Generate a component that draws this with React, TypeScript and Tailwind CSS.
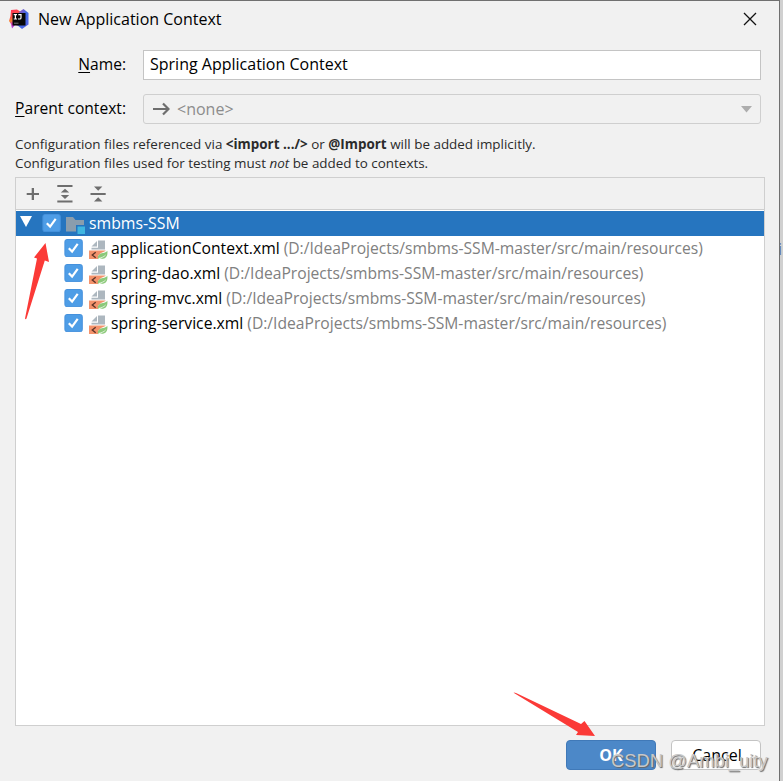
import type { ReactNode } from "react";

const RESOURCES = "(D:/IdeaProjects/smbms-SSM-master/src/main/resources)";

const files = [
  "applicationContext.xml",
  "spring-dao.xml",
  "spring-mvc.xml",
  "spring-service.xml",
];

function AppLogo() {
  return (
    <svg width="20" height="20" viewBox="0 0 20 20" className="shrink-0">
      <defs>
        <linearGradient id="logoLeft" x1="0" y1="0" x2="0.3" y2="1">
          <stop offset="0" stopColor="#fe2857" />
          <stop offset="0.45" stopColor="#fc5a46" />
          <stop offset="0.6" stopColor="#f58a2c" />
          <stop offset="0.75" stopColor="#d23bb0" />
          <stop offset="1" stopColor="#a23be0" />
        </linearGradient>
        <linearGradient id="logoRight" x1="0" y1="0" x2="1" y2="1">
          <stop offset="0" stopColor="#b04fb0" />
          <stop offset="0.5" stopColor="#3f6be8" />
          <stop offset="1" stopColor="#5a62e0" />
        </linearGradient>
      </defs>
      <path d="M2 1L8 0.5L12 3V17L6 16L3 19.500L2 15L0 12L1.500 7Z" fill="url(#logoLeft)" />
      <path d="M10 3L14.500 0L19.500 4V15.500L13 20L8 16Z" fill="url(#logoRight)" />
      <path d="M3.500 4H16.500V16.500H3.500Z" fill="#080808" />
      <path
        d="M4.700 5.700H8M6.400 5.700V10M4.700 10H8M9.300 5.700H12V8.700Q12 10 10.900 10H9"
        fill="none"
        stroke="#fff"
        strokeWidth="1.200"
      />
      <path d="M5 14.200H9.500" stroke="#777" strokeWidth="1" />
    </svg>
  );
}

function Checkbox() {
  return (
    <svg width="19" height="18" viewBox="0 0 19 18" className="shrink-0">
      <rect x="0.900" y="0.500" width="17.400" height="17.200" rx="2" fill="#4e9de6" stroke="#4691dc" />
      <path d="M4.800 9.200L8.100 12.600L13.700 4.800" fill="none" stroke="#fff" strokeWidth="2.200" />
    </svg>
  );
}

function FolderIcon() {
  return (
    <svg width="19" height="18" viewBox="0 0 19 18" className="shrink-0">
      <path d="M0 1H7L9.500 4H18V9H10V15.500H0Z" fill="#8a9dad" />
      <path d="M11.500 10.500H19V18H11.500Z" fill="#40b6e0" />
    </svg>
  );
}

function SpringFileIcon() {
  return (
    <svg width="19" height="20" viewBox="0 0 19 20" className="shrink-0">
      <path d="M2.500 6.500L8 1V6.500Z" fill="#adb7bf" />
      <path d="M9 0.500H16V9.500H2.500V7.800H9Z" fill="#adb7bf" />
      <path d="M0 10.500H16.500V11L12 13L9 16V19H0Z" fill="#f4936c" />
      <path d="M6.700 12.300L3.300 15L6.700 17.700" fill="none" stroke="#5d3528" strokeWidth="1.400" />
      <path
        d="M18.300 10.800C18.900 14.200 18 18.200 14 18.800C12.400 19 11.200 18.600 10.400 18.100L9.300 19.300L8.900 18.600C8.300 15.400 10.800 13.500 14 13.100C15.800 12.900 17.200 12.100 18.300 10.800Z"
        fill="#8cc97a"
      />
      <path d="M9.500 18.500C12 17.700 15 17.100 16.600 15" fill="none" stroke="#fff" strokeWidth="0.700" />
    </svg>
  );
}

function Toolbar() {
  return (
    <div className="flex h-[32px] items-center border-b border-[#cfcfcf] bg-[#f1f1f1] pl-[10px]">
      <svg width="84" height="20" viewBox="0 0 84 20" fill="#6e6e6e">
        <path d="M5.700 4H8V8.900H13V11.100H8V16H5.700V11.100H0.700V8.900H5.700Z" />
        <path d="M31.300 1H46.500V3H31.300ZM31.300 16.500H46.500V18.500H31.300Z" />
        <path d="M39 4.800L43.200 8.500H34.800ZM34.800 11H43.200L39 15Z" />
        <path d="M64.500 9H79.700V11H64.500ZM68 2.500H76.400L72.200 6.800ZM72.200 13.300L76.400 17.500H68Z" />
      </svg>
    </div>
  );
}

function FieldLabel({ children }: { children: ReactNode }) {
  return <div className="w-[127px] shrink-0 pb-[2px] pr-px text-right text-[15.600px]">{children}</div>;
}

function FileRow({ name }: { name: string }) {
  return (
    <div className="flex h-[25px] items-center whitespace-nowrap pb-px pl-[48px] text-[15.700px]">
      <Checkbox />
      <div className="ml-[6px] mt-[4px]">
        <SpringFileIcon />
      </div>
      <span className="ml-[3px]">{name}</span>
      <span className="ml-[4px] text-[15.650px] text-[#808080]">{RESOURCES}</span>
    </div>
  );
}

export default function App() {
  return (
    <div className="relative flex h-[781px] w-[783px] overflow-hidden bg-[#d0d0d0] font-['Open_Sans','Noto_Sans',sans-serif] text-[16px] leading-[20px] text-black">
      <main className="flex w-[780px] shrink-0 flex-col border-r border-t border-[#707070] bg-[#f1f1f1]">
        <header className="flex h-[36px] items-center pl-[9px] pr-[22px]">
          <AppLogo />
          <h1 className="ml-[9px] grow whitespace-nowrap">New Application Context</h1>
          <svg width="14" height="14" viewBox="0 0 14 14">
            <path d="M1 1L13 13M13 1L1 13" stroke="#111" strokeWidth="1.300" />
          </svg>
        </header>

        <div className="mt-[13px] flex h-[30px] items-center">
          <FieldLabel>
            <span className="underline underline-offset-2">N</span>ame:
          </FieldLabel>
          <div className="ml-[16px] flex h-[30px] w-[618px] items-center border border-[#c4c4c4] bg-white pb-[2px] pl-[6px]">
            <span>Spring Application Context</span>
          </div>
        </div>

        <div className="mt-[14px] flex h-[30px] items-center">
          <FieldLabel>
            <span className="underline underline-offset-2">P</span>arent context:
          </FieldLabel>
          <div className="ml-[16px] flex h-[30px] w-[618px] items-center rounded-[3px] border border-[#cfcfcf] pl-[9px] pr-[8px] text-[#8c8c8c]">
            <svg width="17" height="14" viewBox="0 0 17 14" fill="none" stroke="#6e6e6e" strokeWidth="2.200">
              <path d="M0 7H15M10 1.500L15.500 7L10 12.500" />
            </svg>
            <span className="ml-[7px] grow">&lt;none&gt;</span>
            <svg width="11" height="7" viewBox="0 0 11 7">
              <path d="M0 0H11L5.500 6.500Z" fill="#adadad" />
            </svg>
          </div>
        </div>

        <div className="mt-[11px] whitespace-nowrap pl-[15px] text-[13.430px] leading-[19px] text-[#2b2b2b]">
          <p>
            <span>Configuration files referenced via </span>
            <b>&lt;import .../&gt;</b> or <b>@Import</b> will be added implicitly.
          </p>
          <p>
            Configuration files used for testing must <i>not</i> be added to contexts.
          </p>
        </div>

        <section className="ml-[15px] mt-[4px] h-[549px] w-[750px] border border-[#cfcfcf] bg-white">
          <Toolbar />
          <div className="mt-px flex h-[25px] items-center bg-[#2675bf] pb-px pl-[4px] text-white">
            <svg width="12" height="11" viewBox="0 0 12 11" className="mb-[3px]">
              <path d="M0 0H12L6 11Z" fill="#fff" />
            </svg>
            <div className="ml-[10px]">
              <Checkbox />
            </div>
            <div className="ml-[5px] mt-[3px]">
              <FolderIcon />
            </div>
            <span className="ml-[4px] text-[15.800px]">smbms-SSM</span>
          </div>
          {files.map((name) => (
            <FileRow key={name} name={name} />
          ))}
        </section>

        <footer className="mt-[14px] flex justify-end pr-[18px]">
          <button className="h-[30px] w-[90px] rounded-[4px] border border-[#4079b8] bg-[#4c88c8] font-bold text-white">
            OK
          </button>
          <button className="ml-[15px] h-[30px] w-[90px] rounded-[4px] border border-[#c4c4c4] bg-white pl-[2px]">
            Cancel
          </button>
        </footer>
      </main>

      <div className="mt-[239px] w-[3px] overflow-hidden text-[#5c6ea0]">
        <span className="-ml-[2px]">i</span>
      </div>

      <svg width="783" height="781" viewBox="0 0 783 781" className="pointer-events-none absolute left-0 top-0" fill="#fb3a37">
        <path d="M45.500 243L49 262L44.800 260.500L26.500 318.500Q25.500 320 25 318.500L37 258.500L34 257.500Z" />
        <path d="M514 693Q513 692 516 693L581 724L584.500 721L595 736L576 735L578 732Z" />
      </svg>
      <span className="absolute left-[611px] top-[748px] whitespace-nowrap font-['Liberation_Sans',sans-serif] text-[18.400px] leading-[26px] text-[#c8c8c8] [text-shadow:1px_1px_1px_#666]">
        CSDN @Ambi_uity
      </span>
    </div>
  );
}
